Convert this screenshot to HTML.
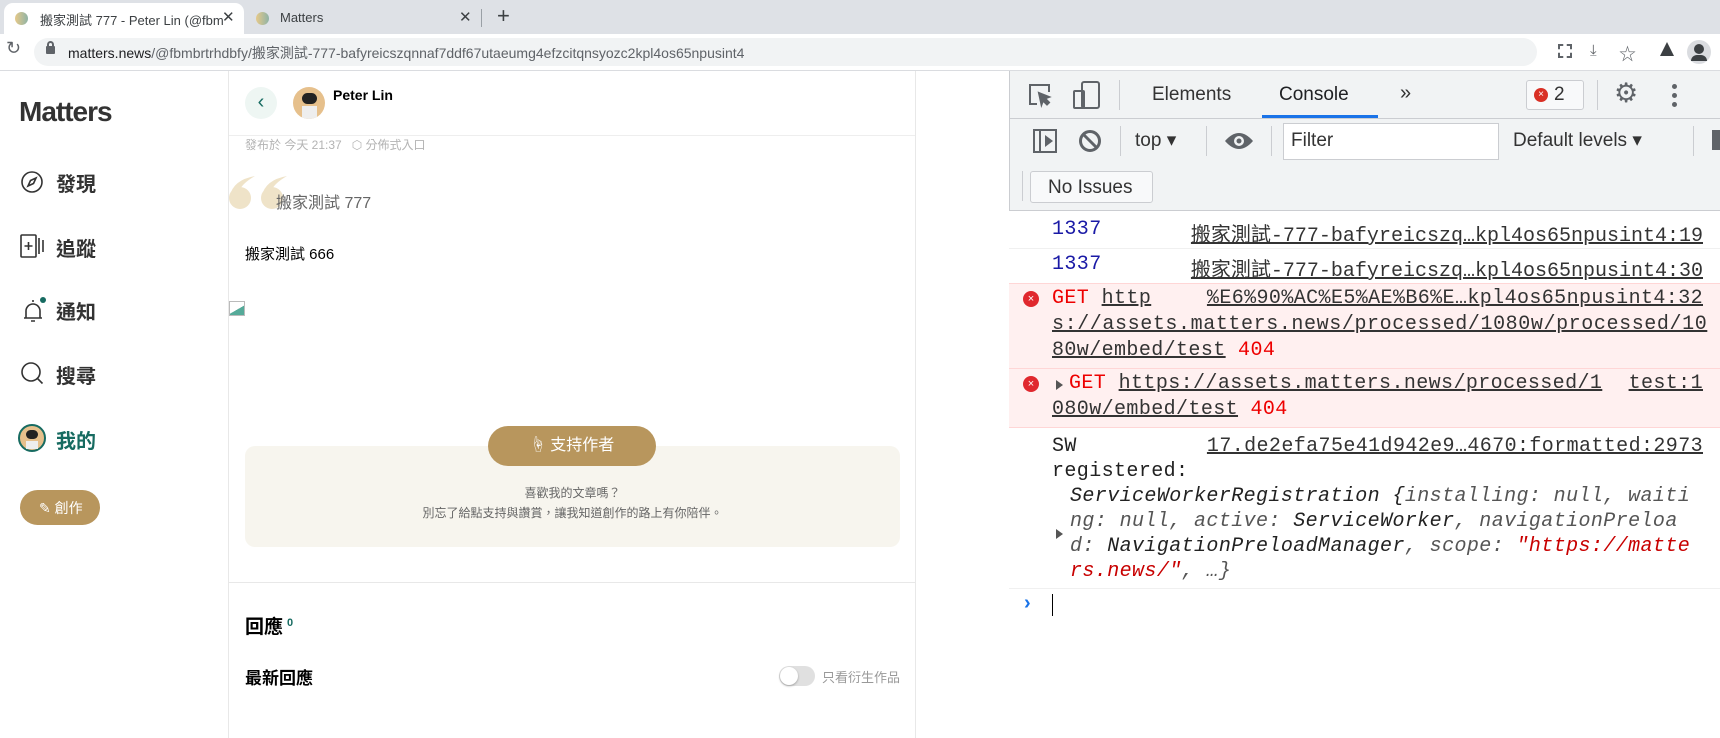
<!DOCTYPE html>
<html><head><meta charset="utf-8"><style>
*{box-sizing:border-box;margin:0;padding:0}
body{width:1720px;height:738px;overflow:hidden;position:relative;background:#fff;font-family:"Liberation Sans","Noto Sans CJK TC",sans-serif;color:#202124}
.a{position:absolute;white-space:nowrap}
.mono{font-family:"Liberation Mono","DejaVu Sans Mono",monospace;font-size:20px;letter-spacing:0.4px}
.u{text-decoration:underline;color:#333}
.red{color:#e00}
</style></head><body>
<!-- tab bar -->
<div class="a" style="left:0;top:0;width:1720px;height:34px;background:#dee1e6"></div>
<div class="a" style="left:4px;top:3px;width:240px;height:31px;background:#fff;border-radius:9px 9px 0 0"></div>
<div class="a" style="left:15px;top:12px;width:13px;height:13px;border-radius:50%;background:linear-gradient(90deg,#e6c98a,#8fb3a5)"></div>
<div class="a" style="left:40px;top:10px;font-size:13px;color:#3c4043">搬家測試 777 - Peter Lin (@fbm</div>
<div class="a" style="left:222px;top:8px;font-size:15px;color:#3c4043">✕</div>
<div class="a" style="left:256px;top:12px;width:13px;height:13px;border-radius:50%;background:linear-gradient(90deg,#e6c98a,#8fb3a5)"></div>
<div class="a" style="left:280px;top:10px;font-size:13px;color:#3c4043">Matters</div>
<div class="a" style="left:459px;top:8px;font-size:15px;color:#3c4043">✕</div>
<div class="a" style="left:481px;top:9px;width:1px;height:18px;background:#9aa0a6"></div>
<div class="a" style="left:497px;top:3px;font-size:22px;color:#3c4043">+</div>
<!-- address row -->
<div class="a" style="left:0;top:34px;width:1720px;height:37px;background:#fff;border-bottom:1px solid #dadce0"></div>
<div class="a" style="left:6px;top:38px;font-size:18px;color:#5f6368">↻</div>
<div class="a" style="left:34px;top:38px;width:1503px;height:28px;border-radius:14px;background:#f1f3f4"></div>
<div class="a" style="left:46px;top:46px;width:9px;height:8px;background:#5f6368;border-radius:1px"></div>
<div class="a" style="left:47px;top:41px;width:7px;height:7px;border:2px solid #5f6368;border-bottom:none;border-radius:4px 4px 0 0"></div>
<div class="a" style="left:68px;top:43px;font-size:14px;color:#202124">matters.news<span style="color:#5f6368">/@fbmbrtrhdbfy/搬家測試-777-bafyreicszqnnaf7ddf67utaeumg4efzcitqnsyozc2kpl4os65npusint4</span></div>
<div class="a" style="left:1558px;top:44px;width:14px;height:14px;border:2px dashed #5f6368"></div>
<div class="a" style="left:1590px;top:42px;font-size:15px;color:#5f6368">⤓</div>
<div class="a" style="left:1619px;top:40px;font-size:17px;color:#5f6368">☆</div>
<div class="a" style="left:1660px;top:42px;width:0;height:0;border-left:7px solid transparent;border-right:7px solid transparent;border-bottom:14px solid #3c4043"></div>
<div class="a" style="left:1687px;top:40px;width:24px;height:24px;border-radius:50%;background:#dadce0"></div>
<div class="a" style="left:1694px;top:44px;width:10px;height:10px;border-radius:50%;background:#3c4043"></div>
<div class="a" style="left:1691px;top:55px;width:16px;height:6px;border-radius:6px 6px 0 0;background:#3c4043"></div>

<!-- sidebar -->
<div class="a" style="left:19px;top:96px;font-size:28px;font-weight:bold;color:#333;letter-spacing:-1px">Matters</div>
<svg class="a" style="left:20px;top:170px" width="24" height="24" viewBox="0 0 24 24" fill="none" stroke="#333" stroke-width="1.6"><circle cx="12" cy="12" r="10"/><path d="M16 8l-2.5 5.5L8 16l2.5-5.5z"/></svg>
<div class="a" style="left:56px;top:168px;font-size:20px;font-weight:bold;color:#333">發現</div>
<svg class="a" style="left:20px;top:234px" width="26" height="24" viewBox="0 0 26 24" fill="none" stroke="#333" stroke-width="1.6"><rect x="1" y="1" width="15" height="22" rx="1"/><path d="M8.5 8v8M4.5 12h8M19 4v16M23 6v12"/></svg>
<div class="a" style="left:56px;top:233px;font-size:20px;font-weight:bold;color:#333">追蹤</div>
<svg class="a" style="left:20px;top:296px" width="28" height="28" viewBox="0 0 28 28" fill="none" stroke="#333" stroke-width="1.6"><path d="M4 22h18M6 22v-7a7 7 0 0 1 14 0v7M11 25h4M13 6V4"/><circle cx="23" cy="4" r="3" fill="#176b61" stroke="none"/></svg>
<div class="a" style="left:56px;top:296px;font-size:20px;font-weight:bold;color:#333">通知</div>
<svg class="a" style="left:20px;top:361px" width="26" height="26" viewBox="0 0 26 26" fill="none" stroke="#333" stroke-width="1.6"><circle cx="11" cy="11" r="9"/><path d="M17.5 17.5l5 5"/></svg>
<div class="a" style="left:56px;top:360px;font-size:20px;font-weight:bold;color:#333">搜尋</div>
<div class="a" style="left:18px;top:424px;width:28px;height:28px;border-radius:50%;border:2px solid #176b61;background:#e6c08c"></div>
<div class="a" style="left:26px;top:430px;width:12px;height:9px;border-radius:5px;background:#222"></div>
<div class="a" style="left:26px;top:441px;width:12px;height:8px;background:#eee"></div>
<div class="a" style="left:56px;top:425px;font-size:20px;font-weight:bold;color:#176b61">我的</div>
<div class="a" style="left:20px;top:490px;width:80px;height:35px;border-radius:18px;background:#b8965d;color:#fff;font-size:14px;padding:8px 0 0 19px">✎ 創作</div>
<div class="a" style="left:228px;top:71px;width:1px;height:667px;background:#e8e8e8"></div>
<div class="a" style="left:915px;top:71px;width:1px;height:667px;background:#e8e8e8"></div>

<!-- article -->
<div class="a" style="left:245px;top:87px;width:32px;height:32px;border-radius:50%;background:#eef6f3;color:#176b61;font-size:20px;text-align:center;line-height:30px">‹</div>
<div class="a" style="left:293px;top:87px;width:32px;height:32px;border-radius:50%;background:#e6c08c;overflow:hidden"><div style="position:absolute;left:9px;top:6px;width:15px;height:11px;border-radius:6px;background:#222"></div><div style="position:absolute;left:9px;top:19px;width:15px;height:14px;background:#eee"></div></div>
<div class="a" style="left:333px;top:87px;font-size:14px;font-weight:bold;color:#000">Peter Lin</div>
<div class="a" style="left:229px;top:135px;width:686px;height:1px;background:#eee"></div>
<div class="a" style="left:245px;top:136px;font-size:12px;color:#b3b3b3">發布於 今天 21:37 &nbsp;&nbsp;⬡ 分佈式入口</div>
<svg class="a" style="left:229px;top:176px" width="62" height="34" viewBox="0 0 62 34" fill="#efe3c8"><circle cx="11" cy="22" r="11"/><path d="M1 20Q4 4 26 0Q12 8 10 16z"/><circle cx="43" cy="22" r="11"/><path d="M33 20Q36 4 58 0Q44 8 42 16z"/></svg>
<div class="a" style="left:276px;top:189px;font-size:16px;color:#666">搬家測試 777</div>
<div class="a" style="left:245px;top:243px;font-size:15px;color:#000">搬家測試 666</div>
<div class="a" style="left:229px;top:301px;width:16px;height:15px;border:1px solid #bbb;background:linear-gradient(150deg,#fff 55%,#5a9 56%)"></div>
<div class="a" style="left:245px;top:446px;width:655px;height:101px;border-radius:10px;background:#f7f5ee"></div>
<div class="a" style="left:488px;top:426px;width:168px;height:40px;border-radius:20px;background:#b8965d;color:#fff;font-size:16px;text-align:center;line-height:40px">☝ 支持作者</div>
<div class="a" style="left:245px;top:484px;width:655px;text-align:center;font-size:12px;color:#666">喜歡我的文章嗎？</div>
<div class="a" style="left:245px;top:504px;width:655px;text-align:center;font-size:12px;color:#666">別忘了給點支持與讚賞，讓我知道創作的路上有你陪伴。</div>
<div class="a" style="left:229px;top:582px;width:686px;height:1px;background:#e8e8e8"></div>
<div class="a" style="left:245px;top:612px;font-size:19px;font-weight:bold;color:#000">回應<sup style="font-size:11px;color:#176b61;margin-left:4px">0</sup></div>
<div class="a" style="left:245px;top:664px;font-size:17px;font-weight:bold;color:#000">最新回應</div>
<div class="a" style="left:779px;top:666px;width:36px;height:20px;border-radius:10px;background:#e0e0e0"></div>
<div class="a" style="left:780px;top:667px;width:18px;height:18px;border-radius:50%;background:#fff;box-shadow:0 1px 2px rgba(0,0,0,.3)"></div>
<div class="a" style="left:822px;top:667px;font-size:13px;color:#999">只看衍生作品</div>

<!-- devtools -->
<div class="a" style="left:1009px;top:71px;width:711px;height:140px;background:#f1f3f4;border-left:1px solid #cbcdd1"></div>
<div class="a" style="left:1009px;top:118px;width:711px;height:1px;background:#cbcdd1"></div>
<div class="a" style="left:1009px;top:210px;width:711px;height:1px;background:#cbcdd1"></div>
<svg class="a" style="left:1027px;top:82px" width="26" height="26" viewBox="0 0 26 26" fill="none" stroke="#5f6368" stroke-width="2"><path d="M10 22H3V3h19v7"/><path d="M12 11l10 4-4 1.5 4 4-2 2-4-4-1.5 4z" fill="#5f6368"/></svg>
<svg class="a" style="left:1073px;top:80px" width="28" height="30" viewBox="0 0 28 30" fill="none" stroke="#5f6368" stroke-width="2"><rect x="9" y="2" width="17" height="26" rx="2"/><rect x="1" y="11" width="10" height="17" rx="1"/></svg>
<div class="a" style="left:1119px;top:80px;width:1px;height:30px;background:#cbcdd1"></div>
<div class="a" style="left:1152px;top:84px;font-size:19px;color:#333">Elements</div>
<div class="a" style="left:1279px;top:84px;font-size:19px;color:#202124">Console</div>
<div class="a" style="left:1262px;top:115px;width:116px;height:3px;background:#1a73e8"></div>
<div class="a" style="left:1400px;top:82px;font-size:20px;color:#333">»</div>
<div class="a" style="left:1526px;top:80px;width:58px;height:30px;border:1px solid #cbcdd1;border-radius:3px;background:#f8f9fa"></div>
<div class="a" style="left:1534px;top:88px;width:14px;height:14px;border-radius:50%;background:#d93025;color:#fff;font-size:10px;text-align:center;line-height:14px">×</div>
<div class="a" style="left:1554px;top:84px;font-size:19px;color:#333">2</div>
<div class="a" style="left:1597px;top:80px;width:1px;height:30px;background:#cbcdd1"></div>
<div class="a" style="left:1614px;top:78px;font-size:27px;color:#5f6368">⚙</div>
<div class="a" style="left:1672px;top:84px;width:5px;height:5px;border-radius:50%;background:#5f6368;box-shadow:0 9px 0 #5f6368,0 18px 0 #5f6368"></div>

<div class="a" style="left:1033px;top:129px;width:24px;height:24px;border:2px solid #5f6368"></div>
<div class="a" style="left:1039px;top:129px;width:2px;height:24px;background:#5f6368"></div>
<div class="a" style="left:1045px;top:135px;width:0;height:0;border-top:6px solid transparent;border-bottom:6px solid transparent;border-left:8px solid #5f6368"></div>
<svg class="a" style="left:1078px;top:129px" width="24" height="24" viewBox="0 0 24 24" fill="none" stroke="#5f6368" stroke-width="3"><circle cx="12" cy="12" r="9.5"/><path d="M5.5 5.5l13 13"/></svg>
<div class="a" style="left:1120px;top:126px;width:1px;height:30px;background:#cbcdd1"></div>
<div class="a" style="left:1135px;top:129px;font-size:19px;color:#333">top ▾</div>
<div class="a" style="left:1206px;top:126px;width:1px;height:30px;background:#cbcdd1"></div>
<svg class="a" style="left:1224px;top:131px" width="30" height="20" viewBox="0 0 30 20"><path d="M1 10Q15-6 29 10Q15 26 1 10z" fill="#5f6368"/><circle cx="15" cy="10" r="5" fill="#f1f3f4"/><circle cx="15" cy="10" r="2.5" fill="#5f6368"/></svg>
<div class="a" style="left:1271px;top:126px;width:1px;height:30px;background:#cbcdd1"></div>
<div class="a" style="left:1283px;top:123px;width:216px;height:37px;background:#fff;border:1px solid #cbcdd1"></div>
<div class="a" style="left:1291px;top:130px;font-size:19px;color:#333">Filter</div>
<div class="a" style="left:1513px;top:129px;font-size:19px;color:#333">Default levels ▾</div>
<div class="a" style="left:1693px;top:126px;width:1px;height:30px;background:#cbcdd1"></div>
<div class="a" style="left:1712px;top:130px;width:8px;height:20px;background:#5f6368"></div>
<div class="a" style="left:1022px;top:171px;width:1px;height:30px;background:#cbcdd1"></div>
<div class="a" style="left:1030px;top:171px;width:123px;height:32px;border:1px solid #cbcdd1;border-radius:3px;background:#f8f9fa;font-size:19px;color:#333;padding:5px 0 0 17px">No Issues</div>

<!-- console rows -->
<div class="a mono" style="left:1052px;top:218px;color:#1a1aa6">1337</div>
<div class="a mono u" style="right:17px;top:218px;letter-spacing:0">搬家測試-777-bafyreicszq…kpl4os65npusint4:19</div>
<div class="a" style="left:1009px;top:248px;width:711px;height:1px;background:#f0f0f0"></div>
<div class="a mono" style="left:1052px;top:253px;color:#1a1aa6">1337</div>
<div class="a mono u" style="right:17px;top:253px;letter-spacing:0">搬家測試-777-bafyreicszq…kpl4os65npusint4:30</div>
<div class="a" style="left:1009px;top:283px;width:711px;height:145px;background:#fff0f0;border-top:1px solid #ffd6d6;border-bottom:1px solid #ffd6d6"></div>
<div class="a" style="left:1009px;top:368px;width:711px;height:1px;background:#ffd6d6"></div>
<div class="a" style="left:1023px;top:291px;width:16px;height:16px;border-radius:50%;background:#e0282e;color:#fff;font-size:11px;text-align:center;line-height:16px">×</div>
<div class="a mono red" style="left:1052px;top:287px">GET <span class="u">http</span></div>
<div class="a mono u" style="right:17px;top:287px">%E6%90%AC%E5%AE%B6%E…kpl4os65npusint4:32</div>
<div class="a mono u" style="left:1052px;top:313px;letter-spacing:0.6px">s://assets.matters.news/processed/1080w/processed/10</div>
<div class="a mono" style="left:1052px;top:339px"><span class="u">80w/embed/test</span> <span class="red">404</span></div>
<div class="a" style="left:1023px;top:376px;width:16px;height:16px;border-radius:50%;background:#e0282e;color:#fff;font-size:11px;text-align:center;line-height:16px">×</div>
<div class="a" style="left:1056px;top:380px;width:0;height:0;border-top:5px solid transparent;border-bottom:5px solid transparent;border-left:7px solid #555"></div>
<div class="a mono red" style="left:1069px;top:372px">GET <span class="u">https://assets.matters.news/processed/1</span></div>
<div class="a mono u" style="right:17px;top:372px">test:1</div>
<div class="a mono" style="left:1052px;top:398px"><span class="u">080w/embed/test</span> <span class="red">404</span></div>
<div class="a mono" style="left:1052px;top:435px;color:#222">SW</div>
<div class="a mono u" style="right:17px;top:435px">17.de2efa75e41d942e9…4670:formatted:2973</div>
<div class="a mono" style="left:1052px;top:460px;color:#222">registered:</div>
<div class="a mono" style="left:1070px;top:485px;font-style:italic;color:#222">ServiceWorkerRegistration {<span style="color:#555">installing: null, waiti</span></div>
<div class="a mono" style="left:1070px;top:510px;font-style:italic;color:#555">ng: null, active: <span style="color:#222">ServiceWorker</span>, navigationPreloa</div>
<div class="a mono" style="left:1070px;top:535px;font-style:italic;color:#555">d: <span style="color:#222">NavigationPreloadManager</span>, scope: <span class="red" style="color:#c80000">"https://matte</span></div>
<div class="a mono" style="left:1070px;top:560px;font-style:italic;color:#555"><span style="color:#c80000">rs.news/"</span>, …}</div>
<div class="a" style="left:1056px;top:529px;width:0;height:0;border-top:5px solid transparent;border-bottom:5px solid transparent;border-left:7px solid #555"></div>
<div class="a" style="left:1009px;top:588px;width:711px;height:1px;background:#f0f0f0"></div>
<div class="a" style="left:1024px;top:592px;font-size:20px;color:#1a73e8;font-weight:bold">›</div>
<div class="a" style="left:1052px;top:594px;width:1px;height:22px;background:#000"></div>
</body></html>
